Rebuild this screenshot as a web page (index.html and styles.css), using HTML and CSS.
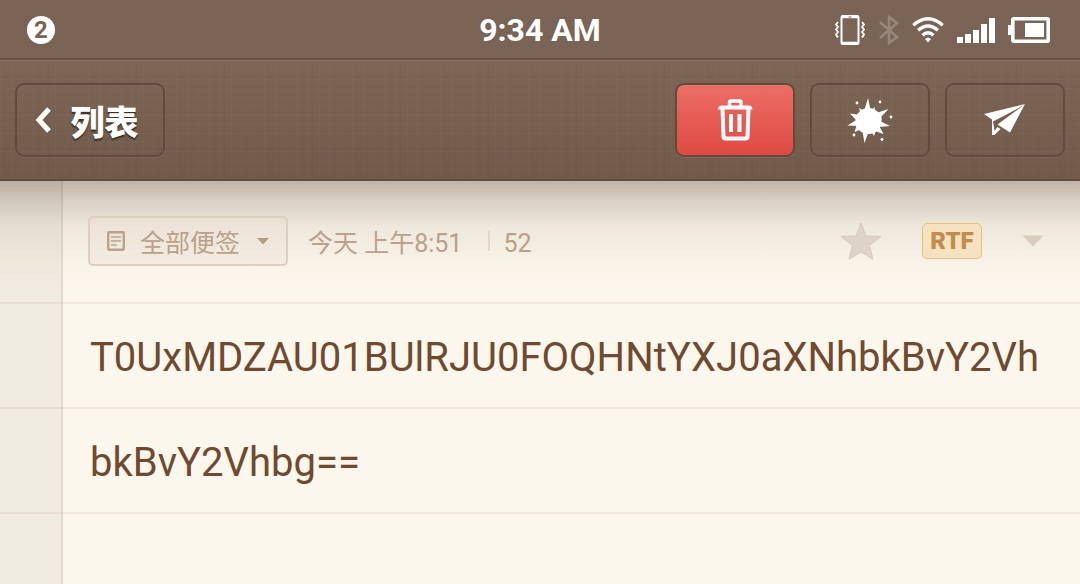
FILE: index.html
```html
<!DOCTYPE html>
<html lang="zh-CN">
<head>
<meta charset="utf-8">
<meta name="viewport" content="width=device-width, initial-scale=1">
<title>便签</title>
<link rel="stylesheet" href="styles.css">
</head>
<body>
<div class="app">
  <header class="status">
    <span class="count">2</span>
    <time class="clock">9:34 AM</time>
    <div class="indicators">
      <svg width="32" height="30" viewBox="0 0 32 30" fill="none" stroke="#fff" stroke-width="1.800"><rect x="7.500" y="1" width="17" height="28" rx="1.500" stroke-width="2"/><path d="M7 2h18M7 28h18" stroke-width="2.500"/><path d="M14.500 2h3" stroke="#796455" stroke-width="1"/><path d="M4 7L2 9.500 4 12 2 14.500 4 17 2 19.500 4 22.500M28 7l2 2.500L28 12l2 2.500L28 17l2 2.500L28 22.500"/></svg>
      <svg class="bluetooth" width="20" height="30" viewBox="0 0 20 30" fill="none" stroke="#97877b" stroke-width="2.600"><path d="M1 7l17 15-8 6V2l8 6L1 23"/></svg>
      <svg class="wifi" width="32" height="26" viewBox="0 0 32 26" fill="none" stroke="#fff" stroke-width="3.400"><path d="M1.300 8.200Q16-4.500 30.700 8.200M6 13.300Q16 4.500 26 13.300M10.500 18.200Q16 13.400 21.500 18.200"/><path d="M13 22q3-2.500 6 0l-3 3.500z" fill="#fff" stroke="none"/></svg>
      <svg class="signal" width="38" height="25" viewBox="0 0 38 25" fill="#fff"><path d="M0 19h6v6H0zM8 16h6v9H8zM16 12h6v13h-6zM24 6h6v19h-6zM32 0h6v25h-6z"/></svg>
      <svg width="42" height="26" viewBox="0 0 42 26"><path d="M0 8h4v10H0z" fill="#fff"/><rect x="4.800" y="1.800" width="35.400" height="22.400" rx="1" fill="none" stroke="#fff" stroke-width="3.600"/><path d="M17 6h19v14H17z" fill="#fff"/></svg>
    </div>
  </header>
  <nav class="toolbar">
    <button class="btn back" type="button">
      <svg width="16" height="26" viewBox="0 0 16 26" fill="none" stroke="#fff" stroke-width="5"><path d="M14 2L4 13l10 11"/></svg>
      列表
    </button>
    <div class="actions">
      <button class="btn danger" type="button" aria-label="删除">
        <svg width="36" height="42" viewBox="0 0 36 42" fill="none" stroke="#fff"><path d="M12.500 7V3.500Q12.500 2 14 2h8.500Q24 2 24 3.500V7" stroke-width="3.400"/><path d="M1 10.500Q1 6.500 5 6.500h26.500q4 0 4 4z" fill="#fff" stroke="none"/><path d="M5.500 10l1 27.500q.1 2 2 2h20q2 0 2-2l1-27.500" stroke-width="4"/><path d="M14 15v18M22.500 15v18" stroke-width="4"/></svg>
      </button>
      <button class="btn" type="button" aria-label="特效">
        <svg width="46" height="46" viewBox="0 0 46 46" fill="#fff"><path d="M21 1L23.500 13 17.500 13zM28 10l-1 6-4-2zM41.500 12L33 21l-3.500-5zM34.500 17v6h-4zM43 29l-11 1 1-6zM36.500 37L25 33l6-6zM27 39l-3-5 5-1zM17.500 46L15.500 34l6 1zM7.500 35L10 27l5 5zM.5 28.500L11 22l1 7zM3 16.500L14 18l-4 6zM12 11l6 3-4 3z"/><circle cx="21.500" cy="24" r="13"/><circle cx="10" cy="6" r="1.400"/><circle cx="33" cy="5" r="1.400"/><circle cx="44" cy="20" r="1.400"/><circle cx="7" cy="38" r="1.400"/><circle cx="35" cy="42.500" r="1.400"/></svg>
      </button>
      <button class="btn" type="button" aria-label="发送">
        <svg width="42" height="32" viewBox="0 0 42 32" fill="#fff"><path d="M41 0L0 10 8 15.500V31h2.500l6-6-3-2-3 4 .2-8z"/><path d="M41 0L13.500 20.500 26 28.500z"/><path d="M9 17.500L38 2.500 12.500 20l-2 6z" fill="#77604f"/></svg>
      </button>
    </div>
  </nav>
  <main class="paper">
    <div class="meta">
      <label class="folder">
        <svg width="18" height="20" viewBox="0 0 18 20" fill="none" stroke="#b9a28e" stroke-width="2.400"><rect x="1.200" y="1.200" width="15.600" height="17.600" rx="1"/><path d="M4 6h10M4 10h10M4 14h6" stroke-width="1.700"/></svg>
        <select class="folder-select" aria-label="文件夹"><option>全部便签</option></select>
        <svg width="12" height="7" viewBox="0 0 12 7" fill="#b39b85"><path d="M0 0h12L6 6.500z"/></svg>
      </label>
      <div class="info">
        <time class="date">今天 上午8:51</time>
        <span class="divider"></span>
        <span class="length">52</span>
      </div>
      <div class="tools">
        <button class="tool star" type="button" aria-label="收藏">
          <svg width="42" height="38" viewBox="0 0 42 38" fill="#ded3c7" stroke="#d6cabd" stroke-linejoin="round"><path d="M21 1l5 13 15 .5L29.500 23.500 33 37.200 21 30 9 37.200l3.500-13.700L1 14.500 16 14z"/></svg>
        </button>
        <button class="tool rtf" type="button">RTF</button>
        <button class="tool" type="button" aria-label="展开">
          <svg width="22" height="12" viewBox="0 0 22 12" fill="#d8ccbf"><path d="M.5.500h21L11 11.500z"/></svg>
        </button>
      </div>
    </div>
    <textarea class="note" aria-label="便签内容" spellcheck="false">T0UxMDZAU01BUlRJU0FOQHNtYXJ0aXNhbkBvY2VhbkBvY2Vhbg==</textarea>
  </main>
</div>
</body>
</html>
```
FILE: styles.css
```css
* { box-sizing: border-box; }

body {
  margin: 0;
  background: #fcf7ec;
  font-family: Roboto, "Noto Sans CJK SC", sans-serif;
}

svg { display: block; flex: none; }

button, select, textarea {
  margin: 0;
  padding: 0;
  border: 0;
  background: none;
  color: inherit;
  font: inherit;
}

.app {
  display: flex;
  flex-direction: column;
  min-height: 100vh;
}

.status {
  display: grid;
  grid-template-columns: 1fr auto 1fr;
  align-items: center;
  height: 60px;
  padding: 0 30px 0 27px;
  border-bottom: 2px solid #67503f;
  background: #796455;
  color: #fff;
}

.count {
  width: 28px;
  height: 28px;
  border-radius: 50%;
  background: #fff;
  color: #796455;
  font-size: 24px;
  font-weight: 700;
  line-height: 28px;
  text-align: center;
}

.clock {
  padding-left: 3px;
  font-size: 32px;
  font-weight: 700;
  line-height: 60px;
}

.indicators {
  display: flex;
  justify-content: flex-end;
  align-items: center;
  gap: 13px;
}

.toolbar {
  display: flex;
  justify-content: space-between;
  padding: 22px 15px;
  border-top: 1px solid #86705f;
  border-bottom: 2px solid #644c3c;
  background:
    repeating-linear-gradient(90deg, rgba(255, 235, 210, .02) 0 1px, transparent 1px 4px, rgba(40, 20, 0, .02) 4px 5px, transparent 5px 11px),
    repeating-linear-gradient(0deg, rgba(255, 235, 210, .02) 0 1px, transparent 1px 3px, rgba(40, 20, 0, .02) 3px 4px, transparent 4px 9px),
    linear-gradient(#7d6656, #705a4a);
}

.actions { display: flex; gap: 15px; }

.btn {
  display: flex;
  align-items: center;
  justify-content: center;
  width: 120px;
  height: 74px;
  border: 2px solid #614b3d;
  border-radius: 9px;
  box-shadow: 0 1px 0 rgba(255, 255, 255, .1), inset 0 1px 0 rgba(255, 255, 255, .06);
  color: #fff;
}

.back {
  gap: 20px;
  width: 150px;
  padding-right: 7px;
  font-size: 34px;
  font-weight: 900;
  text-shadow: 0 2px 1px rgba(40, 25, 15, .7);
}

.danger { background: linear-gradient(#eb6e66, #df4a42); }

.paper {
  display: flex;
  flex: 1;
  flex-direction: column;
  background:
    linear-gradient(rgba(105, 80, 65, .4), rgba(110, 85, 68, .24) 20px, rgba(120, 95, 70, .1) 45px, rgba(130, 100, 70, .03) 80px, transparent 110px),
    linear-gradient(90deg, rgba(90, 90, 80, .07) 61px, rgba(100, 90, 75, .18) 61px 63px, transparent 63px),
    repeating-linear-gradient(transparent 0 121px, #f3e8dc 121px 123px, transparent 123px 226px, #f3e8dc 226px 228px, transparent 228px 331px, #f3e8dc 331px 333px, transparent 333px 436px);
}

.meta {
  display: flex;
  align-items: center;
  height: 124px;
  padding: 0 36px 4px 88px;
  color: #b9a18c;
  font-size: 25px;
}

.folder {
  display: flex;
  align-items: center;
  gap: 15px;
  width: 200px;
  height: 50px;
  padding: 0 17px;
  border: 2px solid #ddcfbf;
  border-radius: 5px;
  background: rgba(235, 220, 210, .3);
}

.folder-select {
  flex: 1;
  min-width: 0;
  padding-top: 4px;
  appearance: none;
}

.info {
  display: flex;
  align-items: baseline;
  margin-left: 20px;
}

.divider {
  align-self: center;
  width: 2px;
  height: 20px;
  margin: 0 13px 0 26px;
  background: #e2d7ca;
}

.tools {
  display: flex;
  align-items: center;
  gap: 40px;
  margin-left: auto;
}

.tool { display: block; }

.rtf {
  width: 60px;
  height: 36px;
  border: 1px solid #e5c08a;
  border-radius: 5px;
  background: #f5e3c0;
  color: #c38c4e;
  font-size: 24px;
  font-weight: 900;
  line-height: 34px;
}

.note {
  flex: 1;
  width: 100%;
  min-height: 270px;
  padding: 0 36px 0 90px;
  outline: 0;
  resize: none;
  overflow: hidden;
  color: #704a30;
  font-size: 40px;
  line-height: 105px;
  word-break: break-all;
}
```
